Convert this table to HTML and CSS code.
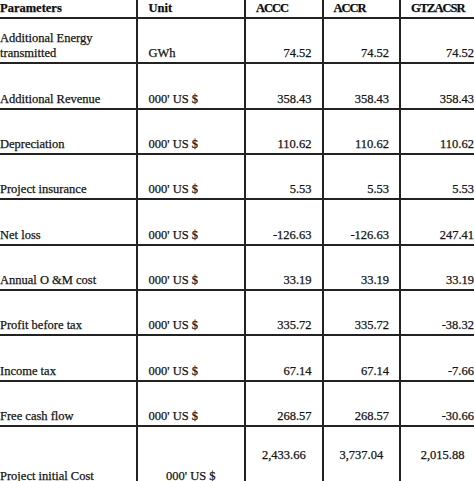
FILE: index.html
```html
<!DOCTYPE html>
<html lang="en">
<head>
<meta charset="utf-8">
<title>Parameters</title>
<link rel="stylesheet" href="styles.css">
</head>
<body>
<table class="data">
  <colgroup>
    <col class="c-param">
    <col class="c-unit">
    <col class="c-val">
    <col class="c-val">
    <col class="c-last">
  </colgroup>
  <thead>
    <tr class="head">
      <th class="param">Parameters</th>
      <th class="unit">Unit</th>
      <th class="code">ACCC</th>
      <th class="code">ACCR</th>
      <th class="code">GTZACSR</th>
    </tr>
  </thead>
  <tbody>
    <tr><td class="param">Additional Energy transmitted</td><td class="unit">GWh</td><td class="num">74.52</td><td class="num">74.52</td><td class="num">74.52</td></tr>
    <tr><td class="param">Additional Revenue</td><td class="unit">000' US $</td><td class="num">358.43</td><td class="num">358.43</td><td class="num">358.43</td></tr>
    <tr><td class="param">Depreciation</td><td class="unit">000' US $</td><td class="num">110.62</td><td class="num">110.62</td><td class="num">110.62</td></tr>
    <tr><td class="param">Project insurance</td><td class="unit">000' US $</td><td class="num">5.53</td><td class="num">5.53</td><td class="num">5.53</td></tr>
    <tr><td class="param">Net loss</td><td class="unit">000' US $</td><td class="num">-126.63</td><td class="num">-126.63</td><td class="num">247.41</td></tr>
    <tr><td class="param">Annual O &amp;M cost</td><td class="unit">000' US $</td><td class="num">33.19</td><td class="num">33.19</td><td class="num">33.19</td></tr>
    <tr><td class="param">Profit before tax</td><td class="unit">000' US $</td><td class="num">335.72</td><td class="num">335.72</td><td class="num">-38.32</td></tr>
    <tr><td class="param">Income tax</td><td class="unit">000' US $</td><td class="num">67.14</td><td class="num">67.14</td><td class="num">-7.66</td></tr>
    <tr><td class="param">Free cash flow</td><td class="unit">000' US $</td><td class="num">268.57</td><td class="num">268.57</td><td class="num">-30.66</td></tr>
    <tr class="tall"><td class="param">Project initial Cost</td><td class="unit center">000' US $</td><td class="mid">2,433.66</td><td class="mid">3,737.04</td><td class="mid">2,015.88</td></tr>
  </tbody>
</table>
</body>
</html>
```

FILE: styles.css
```css
html, body {
  margin: 0;
  padding: 0;
  background: #ffffff;
  overflow: hidden;
}

body {
  font-family: "Liberation Serif", "Times New Roman", serif;
  font-size: 12.5px;
  line-height: 15px;
  color: #141414;
  -webkit-text-stroke: 0.25px #141414;
}

.data {
  border-collapse: collapse;
  table-layout: fixed;
  width: 486px;
  margin-left: -1px;
}

.c-param { width: 137.5px; }
.c-unit { width: 108.5px; }
.c-val { width: 77.5px; }
.c-last { width: 85px; }

.data th,
.data td {
  border: 2px solid #222222;
  padding: 0 10px 1px 10px;
  vertical-align: bottom;
  text-align: left;
  overflow: hidden;
  white-space: nowrap;
}

.data tr > :first-child { border-left: none; }
.data thead th { border-top: none; }

.head th {
  height: 16px;
  font-size: 12.5px;
  font-weight: bold;
  color: #0d0d0d;
}

.head th.code {
  letter-spacing: -1px;
}

.data tbody tr { height: 45.33px; }
.data tbody tr.tall { height: 60px; }

.data .param {
  padding-left: 1px;
  padding-right: 2px;
  white-space: normal;
}

.data .unit { padding-left: 11px; }

.data .num {
  text-align: right;
  padding-right: 10px;
}

.data .center {
  text-align: center;
  padding-left: 0;
  padding-right: 0;
}

.data .mid {
  text-align: center;
  vertical-align: middle;
  padding-left: 0;
  padding-right: 0;
}
```
